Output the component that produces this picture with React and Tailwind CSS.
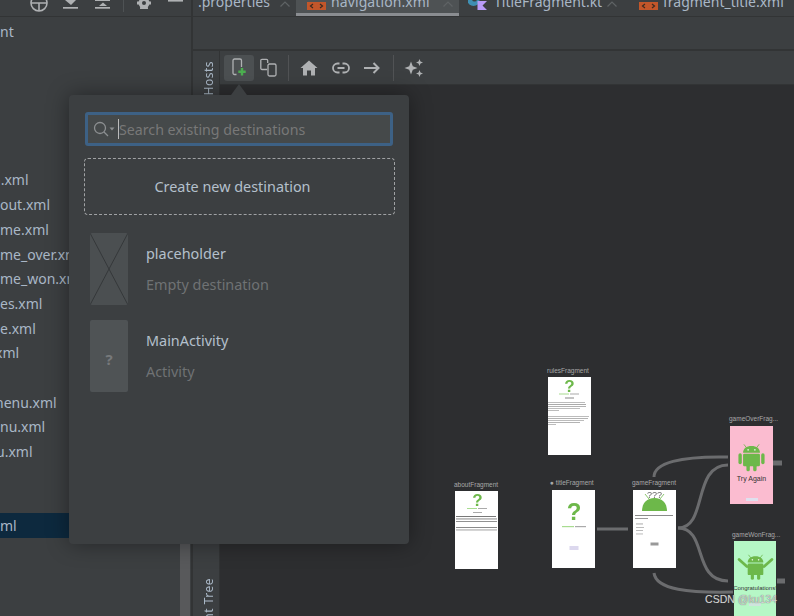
const uiFont = { fontFamily: '"Noto Sans", "Open Sans", sans-serif' };

const treeRows = [
  { text: 'nt' },
  {}, {}, {}, {}, {},
  { text: 'n.xml', cls: '-ml-[8px]' },
  { text: 'out.xml' },
  { text: 'me.xml' },
  { text: 'me_over.xml' },
  { text: 'me_won.xml' },
  { text: 'es.xml' },
  { text: 'e.xml' },
  { text: 'xml', cls: '-ml-[5px]' },
  {},
  { text: 'nenu.xml', cls: '-ml-[5px]' },
  { text: 'nu.xml' },
  { text: 'u.xml', cls: '-ml-[4px]' },
  {}, {},
  { text: 'ml', selected: true },
];

function XmlBadge() {
  return (
    <svg width="19" height="8" viewBox="0 0 19 8" className="shrink-0">
      <rect width="19" height="8" fill="#c2562a" />
      <path d="M6 2 L3.5 4 L6 6 M13 2 L15.5 4 L13 6" fill="none" stroke="#3a2a20" strokeWidth="1.2" />
    </svg>
  );
}

function TabClose() {
  return (
    <svg width="10" height="6" viewBox="0 0 10 6" className="shrink-0">
      <path d="M0.5 5.5 L5 1 L9.5 5.5" fill="none" stroke="#5f6365" strokeWidth="1.2" />
    </svg>
  );
}

function TreeToolbarIcons() {
  return (
    <svg width="192" height="16" viewBox="0 0 192 16" className="block">
      <g fill="none" stroke="#afb1b3" strokeWidth="1.6">
        <circle cx="39" cy="3" r="8" />
        <path d="M39 3 V11 M31 3 H47" />
        <path d="M123.500 0 V12" stroke="#4e5254" strokeWidth="1" />
      </g>
      <g fill="#afb1b3">
        <path d="M65 0 H76 L71 5 Z" />
        <rect x="63" y="7" width="15" height="1.7" />
        <path d="M99 6 L103 2.500 L107 6 Z" />
        <rect x="95" y="7" width="15" height="1.7" />
        <rect x="95" y="0" width="15" height="1" />
        <circle cx="144" cy="3" r="5.500" />
        <path d="M141 -3 H147 L148 9 H140 Z" />
        <rect x="137" y="1.500" width="14" height="3" />
        <rect x="168" y="0" width="15" height="1.600" />
      </g>
      <circle cx="144" cy="3" r="2" fill="#3c3f41" />
    </svg>
  );
}

function KotlinBadge() {
  return (
    <svg width="19" height="11" viewBox="0 0 19 11" className="shrink-0">
      <circle cx="5.500" cy="0" r="6" fill="#3f8fb3" />
      <circle cx="6.500" cy="-1" r="2.500" fill="#3c3f41" />
      <path d="M9.500 1 H19 L14.500 5.500 L19 10 H9.500 Z" fill="#b99bf8" />
    </svg>
  );
}

function AndroidBot({ className, arms = 'down' }) {
  return (
    <svg viewBox="0 0 32 34" className={className}>
      <g fill="#6db84a">
        <path d="M7 2 L10 6 M25 2 L22 6" stroke="#6db84a" strokeWidth="1" />
        <path d="M6 12 C6 7 10 4 16 4 C22 4 26 7 26 12 Z" />
        <rect x="6" y="13" width="20" height="15" rx="1.500" />
        <rect x="10" y="26" width="4" height="8" rx="2" />
        <rect x="18" y="26" width="4" height="8" rx="2" />
        {arms === 'down' ? (
          <>
            <rect x="0.500" y="12.500" width="4" height="13" rx="2" />
            <rect x="27.500" y="12.500" width="4" height="13" rx="2" />
          </>
        ) : (
          <path d="M5 17 L-5 8 M27 17 L37 8" stroke="#6db84a" strokeWidth="3.500" strokeLinecap="round" />
        )}
      </g>
      <circle cx="12" cy="8.500" r="1" fill="#e8f4e0" />
      <circle cx="20" cy="8.500" r="1" fill="#e8f4e0" />
    </svg>
  );
}

function TextBars({ rows }) {
  return rows.map(([x, y, w, o], i) => (
    <rect key={i} x={x} y={y} width={w} height="0.9" fill="#444" opacity={o} />
  ));
}

function Question({ x, y, size }) {
  return (
    <text x={x} y={y} fontSize={size} fontWeight="700" textAnchor="middle" fill="#6db84a" style={{ fontFamily: '"Liberation Sans", sans-serif' }}>
      ?
    </text>
  );
}

function RulesThumb() {
  return (
    <svg viewBox="0 0 43 78" className="block h-full w-full">
      <Question x="21.500" y="15" size="17" />
      <rect x="11" y="16.500" width="10" height="1" fill="#a8dc90" />
      <rect x="22" y="16.500" width="9" height="1" fill="#aaa" />
      <rect x="17" y="20.500" width="9" height="1" fill="#888" />
      <TextBars rows={[[0, 25, 37, 0.4], [0, 27, 38, 0.5], [0, 29, 38, 0.45], [0, 31, 32, 0.4], [0, 33, 11, 0.4], [0, 39, 41, 0.4], [0, 41, 40, 0.45], [0, 43, 36, 0.4], [0, 45, 32, 0.45], [0, 47, 8, 0.4]]} />
    </svg>
  );
}

function AboutThumb() {
  return (
    <svg viewBox="0 0 43 78" className="block h-full w-full">
      <Question x="22.500" y="15" size="17" />
      <rect x="12" y="17" width="10" height="1" fill="#a8dc90" />
      <rect x="23" y="17" width="9" height="1" fill="#aaa" />
      <rect x="18" y="21" width="9" height="1" fill="#aaa" />
      <TextBars rows={[[1, 25, 40, 0.8], [1, 27.500, 41, 0.7], [1, 30, 41, 0.65], [1, 36, 41, 0.7], [1, 38.500, 41, 0.55]]} />
    </svg>
  );
}

function TitleThumb() {
  return (
    <svg viewBox="0 0 43 78" className="block h-full w-full">
      <Question x="22" y="30" size="24" />
      <rect x="10" y="36" width="12" height="1.200" fill="#a8dc90" />
      <rect x="23" y="36" width="11" height="1.200" fill="#aaa" />
      <rect x="17.500" y="56" width="9" height="4" fill="#dcd8ee" />
    </svg>
  );
}

function GameThumb() {
  return (
    <svg viewBox="0 0 43 78" className="block h-full w-full">
      <text x="21.500" y="7.500" fontSize="9" textAnchor="middle" fill="#666" style={{ fontFamily: '"Liberation Sans", sans-serif' }}>
        ???
      </text>
      <path d="M12 4 L16 9 M31 4 L27 9" stroke="#6db84a" strokeWidth="0.8" />
      <path d="M9 21 C9 13 14 8 21.500 8 C29 8 34 13 34 21 Z" fill="#6db84a" />
      <TextBars rows={[[2, 25, 38, 0.7], [2, 28, 13, 0.6], [3, 33.500, 7, 0.5], [3, 37, 8, 0.4], [3, 40, 7, 0.4], [3, 43.500, 7, 0.4]]} />
      <rect x="17.500" y="52.500" width="8" height="3" fill="#999" />
    </svg>
  );
}

export default function App() {
  return (
    <div className="relative flex h-[616px] w-[794px] overflow-hidden bg-[#3c3f41] text-[#a9b7c6]" style={uiFont}>
      {/* project tree */}
      <aside className="flex w-[193px] shrink-0 flex-col border-r-2 border-[#323435]">
        <div className="h-[17px] shrink-0 border-b border-[#323435]">
          <TreeToolbarIcons />
        </div>
        <div className="pt-[2.5px] text-[14px]">
          {treeRows.map((row, i) => (
            <div
              key={i}
              className={`flex h-[24.7px] items-center overflow-hidden whitespace-nowrap ${row.selected ? 'bg-[#0d293e]' : ''}`}
            >
              <span className={row.cls}>{row.text}</span>
            </div>
          ))}
        </div>
      </aside>

      <main className="flex min-w-0 flex-1 flex-col">
        {/* editor tabs, cut by the top of the shot */}
        <div className="flex h-[17px] shrink-0 items-start overflow-hidden border-b border-[#323435] text-[14px] leading-[14px] whitespace-nowrap text-[#a9b7c6]">
          <div className="flex h-[16px] w-[103px] shrink-0 items-start gap-[10px] pl-[5px]">
            <span className="-mt-[5px]">.properties</span>
            <span className="mt-[1px]"><TabClose /></span>
          </div>
          <div className="flex h-[16px] w-[163px] shrink-0 items-start gap-[5px] border-b-[3px] border-[#8a8d91] bg-[#4e5254] pl-[11px]">
            <span className="mt-[2px]"><XmlBadge /></span>
            <span className="-mt-[5px] w-[107px] tracking-[0.1px]">navigation.xml</span>
            <span className="mt-[1px]"><TabClose /></span>
          </div>
          <div className="flex h-[16px] w-[180px] shrink-0 items-start pl-[9px]">
            <KotlinBadge />
            <span className="-mt-[5px] ml-[7px] w-[113px]">TitleFragment.kt</span>
            <span className="mt-[1px]"><TabClose /></span>
          </div>
          <div className="flex h-[16px] items-start gap-[5px]">
            <span className="mt-[2px]"><XmlBadge /></span>
            <span className="-mt-[5px]">fragment_title.xml</span>
          </div>
        </div>

        <div className="h-[34px] shrink-0 border-b-2 border-[#323435]" />

        <div className="flex min-h-0 flex-1">
          {/* side rail */}
          <div className="flex w-[27px] shrink-0 flex-col items-end overflow-hidden border-r border-[#323435] pr-[2px] text-[12px] leading-[16px] tracking-[0.5px] text-[#a9b7c6]">
            <span className="mt-[10px] rotate-180 [writing-mode:vertical-rl]">Destination Hosts</span>
            <span className="mt-auto -mb-[63px] rotate-180 [writing-mode:vertical-rl]">Component Tree</span>
          </div>

          <div className="flex min-w-0 flex-1 flex-col">
            {/* design toolbar */}
            <div className="flex h-[34px] shrink-0 items-center border-b border-[#323435] pl-[4px]">
              <div className="flex h-[26px] w-[30px] items-center justify-center rounded-[3px] bg-[#4c5052]">
                <svg width="20" height="20" viewBox="0 0 20 20" fill="none">
                  <path d="M7.500 16.500 H5.500 C4.700 16.500 4 15.800 4 15 V2.500 C4 1.700 4.700 1 5.500 1 H11 C11.800 1 12.500 1.700 12.500 2.500 V9" stroke="#afb1b3" strokeWidth="1.300" />
                  <path d="M13 10 V17.500 M9.300 13.700 H16.700" stroke="#4caf50" strokeWidth="2.400" />
                </svg>
              </div>
              <div className="flex h-[26px] w-[30px] items-center justify-center">
                <svg width="20" height="20" viewBox="0 0 20 20" fill="none" stroke="#afb1b3" strokeWidth="1.300">
                  <path d="M8 11.500 H3 C2.300 11.500 1.800 11 1.800 10.300 V2.500 C1.800 1.800 2.300 1.300 3 1.300 H7.500 C8.200 1.300 8.700 1.800 8.700 2.500 V5" />
                  <rect x="9" y="6" width="8" height="12" rx="1.500" />
                </svg>
              </div>
              <div className="mr-[5px] ml-[4px] h-[26px] w-px bg-[#515355]" />
              <div className="flex h-[26px] w-[30px] items-center justify-center">
                <svg width="18" height="16" viewBox="0 0 18 16" fill="#afb1b3">
                  <path d="M9 0.500 L17.500 8 H15 V15.500 H11 V10.500 H7 V15.500 H3 V8 H0.500 Z" />
                </svg>
              </div>
              <div className="ml-[2px] flex h-[26px] w-[30px] items-center justify-center">
                <svg width="18" height="12" viewBox="0 0 18 12" fill="none" stroke="#afb1b3" strokeWidth="1.800">
                  <path d="M7.500 1.500 H5.500 C3 1.500 1 3.500 1 6 C1 8.500 3 10.500 5.500 10.500 H7.500 M10.500 1.500 H12.500 C15 1.500 17 3.500 17 6 C17 8.500 15 10.500 12.500 10.500 H10.500 M5.500 6 H12.500" />
                </svg>
              </div>
              <div className="ml-[1px] flex h-[26px] w-[30px] items-center justify-center">
                <svg width="16" height="12" viewBox="0 0 16 12" fill="none" stroke="#afb1b3" strokeWidth="2">
                  <path d="M0 6 H14 M9.500 1 L14.500 6 L9.500 11" />
                </svg>
              </div>
              <div className="mr-[5px] ml-[6px] h-[26px] w-px bg-[#515355]" />
              <div className="flex h-[26px] w-[30px] items-center justify-center">
                <svg width="20" height="20" viewBox="0 0 20 20" fill="#afb1b3">
                  <path d="M7 3.500 L8.800 8.200 L13.500 10 L8.800 11.800 L7 16.500 L5.200 11.800 L0.500 10 L5.200 8.200 Z" />
                  <path d="M15.500 1 L16.500 3.500 L19 4.500 L16.500 5.500 L15.500 8 L14.500 5.500 L12 4.500 L14.500 3.500 Z" />
                  <path d="M15.500 12 L16.500 14.500 L19 15.500 L16.500 16.500 L15.500 19 L14.500 16.500 L12 15.500 L14.500 14.500 Z" />
                </svg>
              </div>
            </div>

            {/* navigation graph */}
            <div className="relative min-h-0 flex-1 overflow-hidden bg-[#2d2e30] text-[6.5px] leading-[8px] whitespace-nowrap text-[#a8a8a8]" style={{ fontFamily: '"Liberation Sans", sans-serif' }}>
              <div className="absolute top-[282px] left-[327px]">rulesFragment</div>
              <div className="absolute top-[292px] left-[328px] h-[78px] w-[43px] bg-white blur-[0.3px]"><RulesThumb /></div>

              <div className="absolute top-[396px] left-[234px]">aboutFragment</div>
              <div className="absolute top-[406px] left-[235px] h-[78px] w-[43px] bg-white blur-[0.3px]"><AboutThumb /></div>

              <div className="absolute top-[394px] left-[330px]">● titleFragment</div>
              <div className="absolute top-[405px] left-[332px] h-[78px] w-[43px] bg-white blur-[0.3px]"><TitleThumb /></div>

              <div className="absolute top-[394px] left-[412px]">gameFragment</div>
              <div className="absolute top-[405px] left-[413px] h-[78px] w-[43px] bg-white blur-[0.3px]"><GameThumb /></div>

              <div className="absolute top-[330px] left-[509px]">gameOverFrag...</div>
              <div className="absolute top-[341px] left-[510px] flex h-[78px] w-[43px] flex-col items-center bg-[#fbbcd0] pt-[16px]">
                <AndroidBot className="h-[30px] w-[27px] overflow-visible" />
                <span className="mt-[2px] text-[7px] leading-[9px] text-[#333]">Try Again</span>
                <span className="mt-[15px] h-[3px] w-[12px] bg-[#dfe0ee]" />
              </div>

              <div className="absolute top-[446px] left-[512px]">gameWonFrag...</div>
              <div className="absolute top-[456px] left-[514px] flex h-[78px] w-[42px] flex-col items-center bg-[#b6f7c6] pt-[11px]">
                <AndroidBot arms="up" className="h-[29px] w-[25px] overflow-visible" />
                <span className="mt-[3px] text-[6px] leading-[8px] text-[#333]">Congratulations!</span>
                <span className="mt-[11px] h-[3px] w-[12px] bg-[#cfe4dd]" />
              </div>

              <svg className="absolute inset-0 h-full w-full" viewBox="220 85 574 531" fill="none" stroke="#6b6c6e" strokeWidth="3">
                <path d="M597 529 H628" />
                <path d="M678 528 C708 528 692 465 728 465" />
                <path d="M678 528 C708 528 692 581 728 581" />
                <path d="M654 477 C654 463 680 456 728 457" />
                <path d="M654 573 C656 590 690 593 733 592" />
                <path d="M773 463 H782" strokeWidth="5" />
                <path d="M777 581 H785" strokeWidth="5" />
              </svg>

              <div className="absolute right-[17px] bottom-[10px] text-[10.5px] leading-[13px] text-[#d4d4d4] [text-shadow:0_0_1px_#555]">CSDN @ku134</div>
            </div>
          </div>
        </div>
      </main>

      {/* scrollbar of the tree, over the panel */}
      <div className="absolute top-[500px] bottom-0 left-[180px] w-[10px] bg-[#58595b]" />

      {/* add destination popup */}
      <div className="absolute top-[95px] left-[69px] flex h-[449px] w-[340px] flex-col rounded-[4px] bg-[#3c3f41] pt-[17px] pl-[16px] shadow-[0_0_22px_rgba(0,0,0,0.4)]">
        <svg width="18" height="12" viewBox="0 0 18 12" className="absolute -top-[12px] left-[161px]">
          <path d="M1 12 L9 1 L17 12 Z" fill="#3c3f41" />
        </svg>

        <div className="flex h-[34px] w-[308px] items-center rounded-[3px] border-[3px] border-[#3d6185] bg-[#45494a] pl-[5px] text-[14.2px] text-[#787878]">
          <svg width="22" height="16" viewBox="0 0 22 16" fill="none" stroke="#8c8f91" strokeWidth="1.300" className="shrink-0">
            <circle cx="7" cy="7" r="5.500" />
            <path d="M11 11 L15 15" />
            <path d="M16.500 6.500 H21.500 L19 9.500 Z" fill="#8c8f91" stroke="none" />
          </svg>
          <span className="ml-[3px] h-[20px] w-px shrink-0 bg-[#bbbbbb]" />
          <span className="mt-[2px] whitespace-nowrap">Search existing destinations</span>
        </div>

        <div className="mt-[12px] -ml-px flex h-[57px] w-[311px] items-center justify-center rounded-[4px] border border-dashed border-[#a0a2a4] pr-[14px] text-[14.4px] text-[#b4c0cc]">
          Create new destination
        </div>

        <div className="mt-[18px] flex h-[72px] items-center gap-[18px] pl-[5px]">
          <svg width="38" height="72" viewBox="0 0 38 72" className="shrink-0 rounded-[2px] bg-[#4b4f51]">
            <path d="M0 0 L38 72 M38 0 L0 72" stroke="#35383a" strokeWidth="1" />
          </svg>
          <div className="flex flex-col gap-[11px] text-[14.4px] leading-[20px]">
            <span className="text-[#b4c0cc]">placeholder</span>
            <span className="text-[#6f7274]">Empty destination</span>
          </div>
        </div>

        <div className="mt-[15px] flex h-[72px] items-center gap-[18px] pl-[5px]">
          <div className="flex h-[72px] w-[38px] shrink-0 items-center justify-center rounded-[2px] bg-[#4f5355] pt-[6px] text-[15px] font-bold text-[#77797b]">?</div>
          <div className="flex flex-col gap-[11px] text-[14.4px] leading-[20px]">
            <span className="text-[#b4c0cc]">MainActivity</span>
            <span className="text-[#6f7274]">Activity</span>
          </div>
        </div>
      </div>
    </div>
  );
}
